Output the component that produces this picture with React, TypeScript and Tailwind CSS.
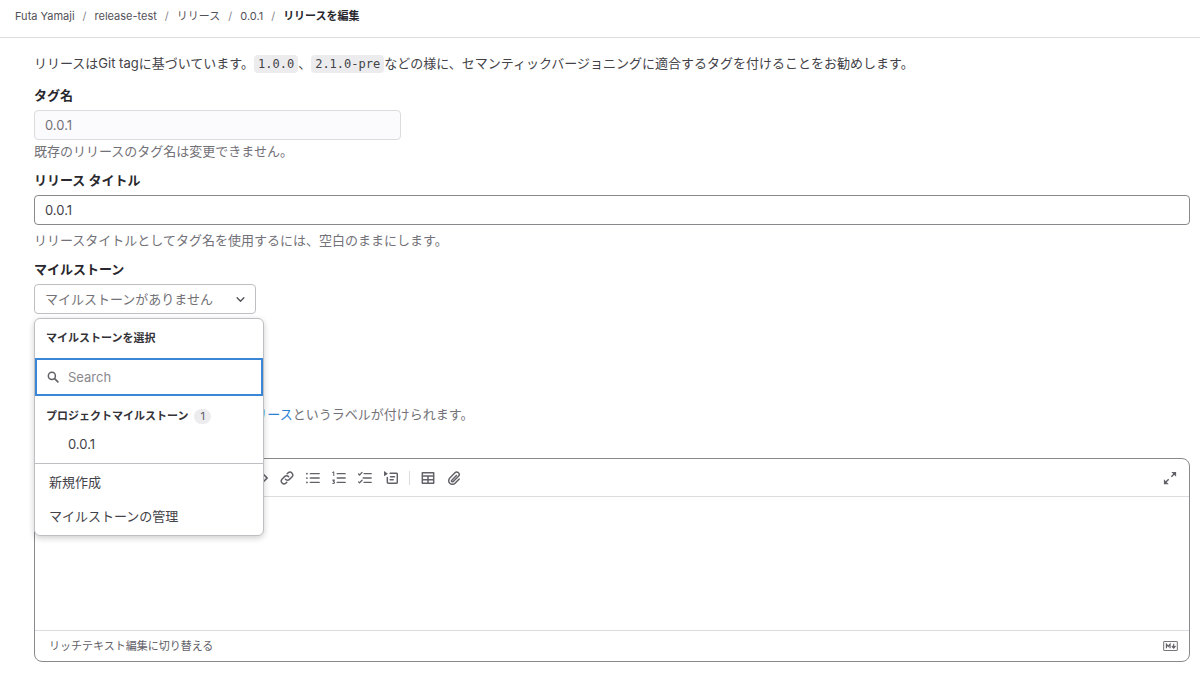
import { useState } from 'react'
import type { ReactNode } from 'react'

// ── Types ──────────────────────────────────────────────────────────────────

interface Crumb {
  label: string
  href: string
}

interface Tool {
  id: string
  label: string
  icon: ReactNode
}

const CRUMBS: Crumb[] = [
  { label: 'Futa Yamaji', href: '#user' },
  { label: 'release-test', href: '#project' },
  { label: 'リリース', href: '#releases' },
  { label: '0.0.1', href: '#release' },
]

// ── Icons ──────────────────────────────────────────────────────────────────

function Icon({ children, className = 'size-[14px]' }: { children: ReactNode; className?: string }) {
  return (
    <svg
      viewBox="0 0 16 16"
      className={`shrink-0 ${className}`}
      fill="none"
      stroke="currentColor"
      strokeWidth={1.7}
      strokeLinecap="round"
      strokeLinejoin="round"
      aria-hidden="true"
    >
      {children}
    </svg>
  )
}

const TEXT_TOOLS: Tool[] = [
  { id: 'bold', label: '太字', icon: <path d="M4 2h5a3 3 0 0 1 0 6H4zM4 8h6a3 3 0 0 1 0 6H4z" /> },
  { id: 'italic', label: '斜体', icon: <path d="M6 2h6M4 14h6M10 2 6 14" /> },
  { id: 'strike', label: '取り消し線', icon: <path d="M1 8h14M12 4c-2-3-8-2-8 1M4 12c2 3 8 2 8-1" /> },
  { id: 'quote', label: '引用', icon: <path d="M6 4C3 5 2 7 2 11h4V8H3M14 4c-3 1-4 3-4 7h4V8h-3" /> },
  { id: 'code', label: 'コード', icon: <path d="M5 4 1 8l4 4M11 4l4 4-4 4" strokeWidth={2} /> },
  {
    id: 'link',
    label: 'リンク',
    icon: (
      <>
        <path d="M6.2 9.4a3.2 3.2 0 0 0 4.6.2l3-3a3.2 3.2 0 0 0-4.5-4.5L8.2 3.2" />
        <path d="M9.8 6.6a3.2 3.2 0 0 0-4.6-.2l-3 3a3.2 3.2 0 0 0 4.5 4.5l1.1-1.1" />
      </>
    ),
  },
  {
    id: 'bullets',
    label: '箇条書き',
    icon: (
      <>
        <path d="M5 3h10M5 8h10M5 13h10" />
        <path d="M1 3h.1M1 8h.1M1 13h.1" strokeWidth={2} />
      </>
    ),
  },
  {
    id: 'numbers',
    label: '番号付きリスト',
    icon: (
      <>
        <path d="M6 3h9M6 8h9M6 13h9" />
        <path d="M.8 1.6 2 1v4M.8 10.4h2L1.6 12c2 0 1.6 2.6-.8 2" strokeWidth={1.2} />
      </>
    ),
  },
  {
    id: 'tasks',
    label: 'タスクリスト',
    icon: (
      <>
        <path d="M7 3h8M6 8h9M7 13h8" />
        <path d="m.6 3.4 1.2 1.2 2.800-3M.6 12.400l1.200 1.200 2.800-3" strokeWidth={1.5} />
      </>
    ),
  },
  {
    id: 'collapsible',
    label: '折りたたみセクション',
    icon: (
      <>
        <path d="M7 2.500h7a1.200 1.200 0 0 1 1.200 1.200v9.100A1.200 1.200 0 0 1 14 14H5a1.200 1.200 0 0 1-1.200-1.200V7.500M7.500 6.500H12M7 10h3.500" />
        <path d="M0 0v6l4.500-3z" fill="currentColor" stroke="none" />
      </>
    ),
  },
]

const INSERT_TOOLS: Tool[] = [
  {
    id: 'table',
    label: 'テーブル',
    icon: <path d="M1.500 2h13v12h-13zM1.500 5.800h13M1.500 9.900h13M8 5.800V14" />,
  },
  {
    id: 'attach',
    label: 'ファイルを添付',
    icon: (
      <path d="m10.800 5.200-5.300 5.300a1.100 1.100 0 0 0 1.600 1.600l6-6a2.800 2.800 0 0 0-4-4L3.200 8a4.200 4.200 0 0 0 6 6l4.800-4.800" />
    ),
  },
]

// ── Sub-components ─────────────────────────────────────────────────────────

function ToolButton({ label, icon }: { label: string; icon: ReactNode }) {
  return (
    <button type="button" aria-label={label} className="flex size-[26px] items-center justify-center rounded hover:bg-[#ececef]">
      <Icon>{icon}</Icon>
    </button>
  )
}

function Label({ htmlFor, children }: { htmlFor: string; children: ReactNode }) {
  return (
    <label htmlFor={htmlFor} className="mb-[5px] block font-bold text-[#28272d]">
      {children}
    </label>
  )
}

function Code({ children }: { children: ReactNode }) {
  return (
    <code className="rounded bg-[#ececef] px-1 py-[2px] font-['DejaVu_Sans_Mono',monospace] text-[12px] leading-4">
      {children}
    </code>
  )
}

function MilestoneMenu() {
  const [query, setQuery] = useState('')

  return (
    <div className="absolute top-full left-0 z-10 mt-1 w-[230px] rounded-md border border-[#bfbfc3] bg-white shadow-[0_2px_6px_rgba(0,0,0,0.2)]">
      <h2 className="px-[11px] pt-[9px] pb-[10px] text-[11px] font-bold text-[#333238]">マイルストーンを選択</h2>

      <div className="flex h-[38px] items-center gap-[9px] border-2 border-[#3a86d6] px-[10px]">
        <Icon className="size-[12px] text-[#626168]">
          <circle cx="6.5" cy="6.5" r="4.7" strokeWidth={2} />
          <path d="m10.500 10.500 4 4" strokeWidth={2.2} />
        </Icon>
        <input
          type="search"
          aria-label="Search"
          placeholder="Search"
          value={query}
          onChange={(e) => setQuery(e.target.value)}
          className="w-full min-w-0 outline-none placeholder:text-[#89888d]"
        />
      </div>

      <div className="border-b border-[#bfbfc3] pt-[10px] pb-[9px]">
        <div className="flex items-center gap-[6px] px-[11px] text-[11px]">
          <h3 className="font-bold text-[#333238]">プロジェクトマイルストーン</h3>
          <span className="rounded-full bg-[#ececef] px-[6px] leading-[15px] text-[#626168]">1</span>
        </div>
        <button type="button" className="mt-2 block w-full px-[33px] text-left">
          0.0.1
        </button>
      </div>

      <div className="flex flex-col gap-[14px] px-[14px] pt-2 pb-[9px]">
        <a href="#new">新規作成</a>
        <a href="#manage">マイルストーンの管理</a>
      </div>
    </div>
  )
}

function NotesEditor() {
  return (
    <div className="flex flex-col rounded-lg border border-[#89888d] text-[#626168]">
      <div className="flex h-[38px] items-center border-b border-[#dcdcde] pr-[6px] pl-[14px]">
        <button type="button" className="w-[95px] text-left text-[11px]">
          プレビュー
        </button>
        {TEXT_TOOLS.map((tool) => (
          <ToolButton key={tool.id} label={tool.label} icon={tool.icon} />
        ))}
        <span className="mx-[5px] h-[14px] w-px bg-[#dcdcde]" />
        {INSERT_TOOLS.map((tool) => (
          <ToolButton key={tool.id} label={tool.label} icon={tool.icon} />
        ))}
        <span className="flex-1" />
        <ToolButton
          label="全画面表示"
          icon={
            <>
              <path d="m9.500 6.500 4-4M6.500 9.500l-4 4" strokeLinecap="butt" />
              <path d="M9.500 1H15v5.500zM6.500 15H1V9.500z" fill="currentColor" stroke="none" />
            </>
          }
        />
      </div>
      <textarea id="notes" className="block h-[133px] w-full resize-none px-[14px] py-2 outline-none" />
      <div className="flex items-center justify-between border-t border-[#dcdcde] py-[5px] pr-[11px] pl-[14px]">
        <button type="button" className="text-[11px]">
          リッチテキスト編集に切り替える
        </button>
        <a href="#markdown" aria-label="Markdown" className="flex">
          <svg viewBox="0 0 16 11" className="h-[10px] w-[15px]" fill="none" stroke="currentColor" aria-hidden="true">
            <rect x="0.5" y="0.5" width="15" height="10" rx="0.5" />
            <path d="M3.500 8V3.500l2 2.500 2-2.500V8M11.500 3v4.500M9.500 5.500l2 2.200 2-2.200" strokeWidth={1.3} />
          </svg>
        </a>
      </div>
    </div>
  )
}

// ── Main component ─────────────────────────────────────────────────────────

export default function App() {
  const [title, setTitle] = useState('0.0.1')
  const [open, setOpen] = useState(true)

  return (
    <div
      lang="ja"
      className="bg-white font-['Inter','Noto_Sans_CJK_JP',sans-serif] text-[13px] leading-5 text-[#434248]"
    >
      <nav aria-label="パンくず" className="border-b border-[#dcdcde] px-[15px] pt-[6px] pb-[11px] text-[11px]">
        <ol className="flex items-center">
          {CRUMBS.map((crumb) => (
            <li key={crumb.href} className="flex text-[#535158]">
              <a href={crumb.href}>{crumb.label}</a>
              <span className="mx-2 text-[#89888d]">/</span>
            </li>
          ))}
          <li aria-current="page" className="font-bold text-[#28272d]">
            リリースを編集
          </li>
        </ol>
      </nav>

      <main className="pt-[15px] pr-[10px] pb-3 pl-[34px]">
        <p>
          リリースはGit tagに基づいています。<Code>1.0.0</Code>、<Code>2.1.0-pre</Code>
          などの様に、セマンティックバージョニングに適合するタグを付けることをお勧めします。
        </p>

        <form className="mt-3 flex flex-col gap-[9px]" onSubmit={(e) => e.preventDefault()}>
          <div>
            <Label htmlFor="tag">タグ名</Label>
            <input
              id="tag"
              disabled
              value="0.0.1"
              className="block h-[30px] w-full max-w-[367px] rounded border border-[#dcdcde] bg-[#fbfafd] px-[10px] text-[#737278]"
            />
            <p className="mt-px text-[#737278]">既存のリリースのタグ名は変更できません。</p>
          </div>

          <div>
            <Label htmlFor="title">リリース タイトル</Label>
            <input
              id="title"
              value={title}
              onChange={(e) => setTitle(e.target.value)}
              className="block h-[30px] w-full rounded border border-[#89888d] px-[10px]"
            />
            <p className="mt-[5px] text-[#737278]">リリースタイトルとしてタグ名を使用するには、空白のままにします。</p>
          </div>

          <div className="mb-[21px]">
            <Label htmlFor="milestone">マイルストーン</Label>
            <div className="relative w-[222px]">
              <button
                id="milestone"
                type="button"
                aria-haspopup="true"
                aria-expanded={open}
                onClick={() => setOpen(!open)}
                className="flex h-[30px] w-full items-center justify-between rounded border border-[#bfbfc3] px-[10px] text-[#737278]"
              >
                マイルストーンがありません
                <Icon className="size-[9px] text-[#535158]">
                  <path d="m2 5 6 6 6-6" strokeWidth={2.4} />
                </Icon>
              </button>
              {open && <MilestoneMenu />}
            </div>
          </div>

          <div>
            <Label htmlFor="date">リリース日</Label>
            <input id="date" className="block h-[30px] w-[200px] rounded border border-[#89888d] px-[10px]" />
            <p className="mt-[5px] text-[#737278]">
              日付が将来のリリースには、
              <a href="#upcoming" className="text-[#2b80d6]">
                今後のリリース
              </a>
              というラベルが付けられます。
            </p>
          </div>

          <div>
            <Label htmlFor="notes">リリースノート</Label>
            <NotesEditor />
          </div>
        </form>
      </main>
    </div>
  )
}
